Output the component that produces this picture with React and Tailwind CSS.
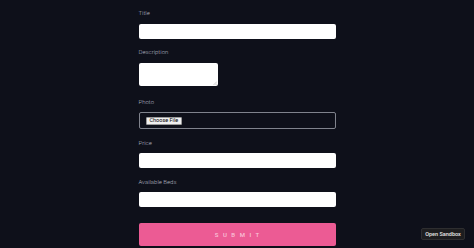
export default function App() {
  const label = "block text-[6px] leading-[8px] font-light text-[#b4b7c2]";
  const input = "block w-full h-[15px] bg-white rounded-[2px] border-0 outline-none";
  return (
    <div
      className="relative w-[474px] h-[248px] overflow-hidden bg-[#0e101a]"
      style={{ fontFamily: "Roboto, 'Noto Sans', sans-serif" }}
    >
      <form className="w-[197px] mx-auto pt-[9px] flex flex-col">
        <label className={label}>Title</label>
        <input className={input + " mt-[7px]"} />

        <label className={label + " mt-[9px]"}>Description</label>
        <div className="relative mt-[7px] w-[79px] h-[23px] bg-white rounded-[2px]">
          <svg className="absolute right-[1px] bottom-[1px]" width="4" height="4" viewBox="0 0 4 4">
            <path d="M4 0.5 L0.5 4 M4 2.5 L2.5 4" stroke="#b0b0b0" strokeWidth="0.6" />
          </svg>
        </div>

        <label className={label + " mt-[12px]"}>Photo</label>
        <div className="mt-[6px] h-[17px] w-full rounded-[2px] border border-[#80838d] flex items-center pl-[6px]">
          <span className="h-[8px] px-[3px] flex items-center bg-[#f0f0f0] border border-[#9a9a9a] rounded-[1px] text-[5.5px] leading-none text-black">
            Choose File
          </span>
        </div>

        <label className={label + " mt-[10px]"}>Price</label>
        <input className={input + " mt-[6px]"} />

        <label className={label + " mt-[9.5px]"}>Available Beds</label>
        <input className={input + " mt-[6.5px]"} />

        <button
          type="button"
          className="mt-[16px] h-[23px] w-full rounded-[2px] bg-[#ec5b94] text-[6px] font-medium tracking-[0.75em] pl-[0.75em] text-[#f9c3d8] flex items-center justify-center"
        >
          SUBMIT
        </button>
      </form>

      <div className="absolute right-[9px] bottom-[8px] w-[44px] h-[12px] flex items-center justify-center bg-[#1d1d1f] border border-[#2e2e30] rounded-[2px] text-[5.5px] font-medium text-[#e8e8e8]">
        Open Sandbox
      </div>
    </div>
  );
}
